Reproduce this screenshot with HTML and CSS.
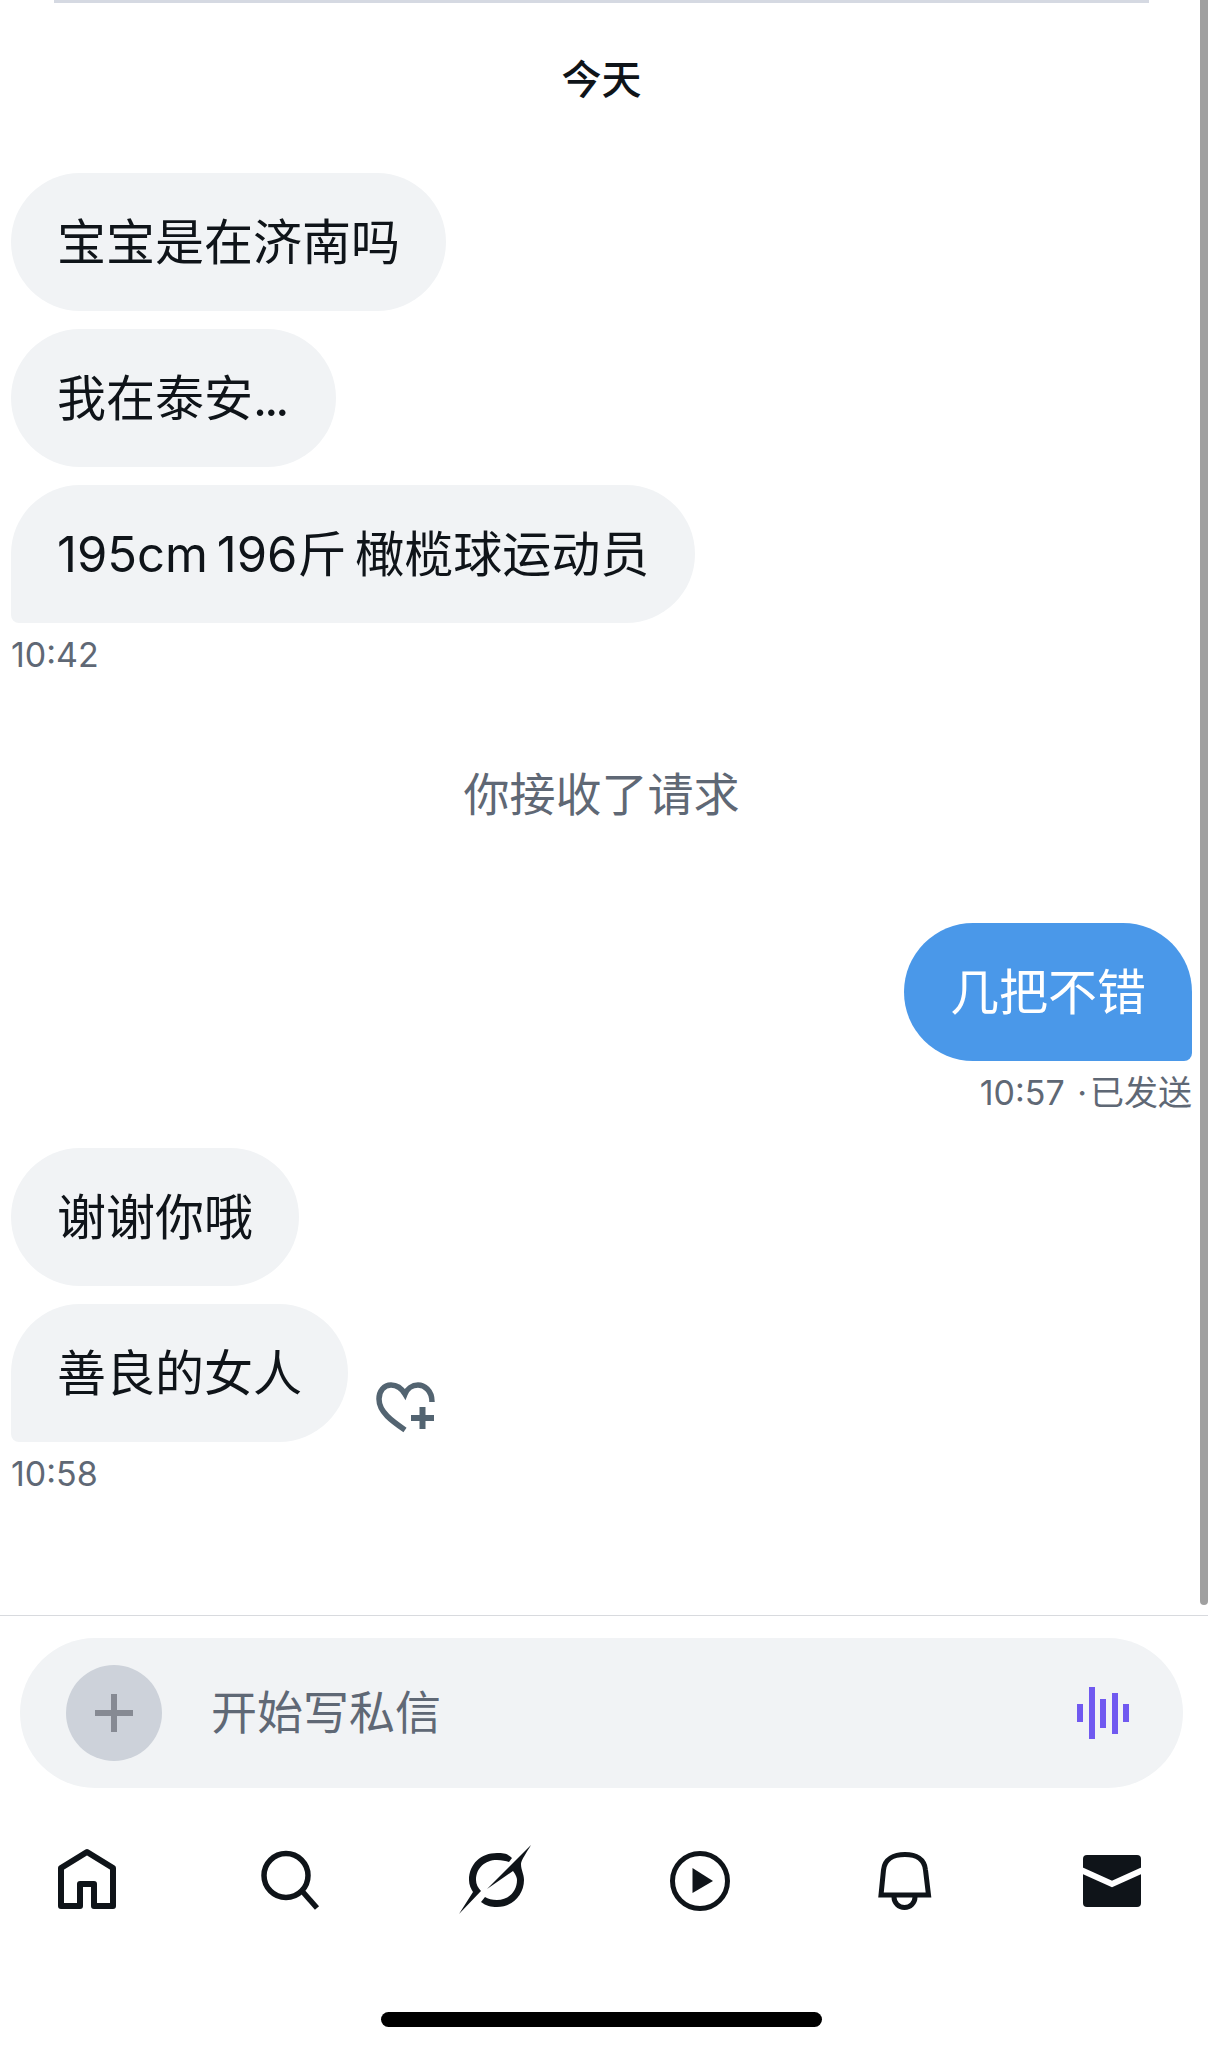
FILE: index.html
```html
<!DOCTYPE html>
<html lang="zh-CN">
<head>
    <meta charset="UTF-8">
    <meta name="viewport" content="width=device-width, initial-scale=1.0">
    <title>私信</title>
    <link rel="stylesheet" href="styles.css">
</head>
<body>
    <div class="page">
        <div class="scrollbar"></div>

        <div class="thread">
            <div class="top-rule"></div>
            <div class="day-label">今天</div>

            <div class="group first-group">
                <div class="bubble">宝宝是在济南吗</div>
                <div class="bubble">我在泰安<span class="dots">...</span></div>
                <div class="bubble tail-left">195cm 196斤 橄榄球运动员</div>
            </div>
            <div class="time">10:42</div>

            <div class="notice">你接收了请求</div>

            <div class="sent-row">
                <div class="bubble sent">几把不错</div>
            </div>
            <div class="time sent-time">10:57 <span class="dot">·</span>已发送</div>

            <div class="group second-group">
                <div class="bubble">谢谢你哦</div>
                <div class="bubble-row">
                    <div class="bubble tail-left">善良的女人</div>
                    <svg class="react-icon" viewBox="0 0 60 52" width="60" height="52">
                        <path d="M56 20C56 8 48 3 42 3C36 3 31 7 29 12C26 7 21 3 15 3C8 3 3 9 3 17C3 30 16 39 29 48" fill="none" stroke="#536471" stroke-width="5.5"/>
                        <path d="M35 36H58M46.500 25V47" fill="none" stroke="#536471" stroke-width="6"/>
                    </svg>
                </div>
            </div>
            <div class="time">10:58</div>
        </div>

        <div class="composer">
            <div class="input-pill">
                <div class="add-btn">
                    <svg viewBox="0 0 38 38" width="38" height="38">
                        <path d="M0 19H38M19 0V38" fill="none" stroke="#868a93" stroke-width="6"/>
                    </svg>
                </div>
                <div class="placeholder">开始写私信</div>
                <div class="voice-bars">
                    <span class="bar bar-s"></span>
                    <span class="bar bar-xl"></span>
                    <span class="bar bar-m"></span>
                    <span class="bar bar-l"></span>
                    <span class="bar bar-s"></span>
                </div>
            </div>
        </div>

        <div class="tabbar">
            <svg class="tab-icon" viewBox="0 0 72 72">
                <path d="M10 24L36 8L62 24V62H43V40H29V62H10Z" fill="none" stroke="#0f1419" stroke-width="6" stroke-linejoin="round"/>
            </svg>
            <svg class="tab-icon" viewBox="0 0 72 72">
                <circle cx="30" cy="31.500" r="22" fill="none" stroke="#0f1419" stroke-width="5.500"/>
                <path d="M46 47L61 64" fill="none" stroke="#0f1419" stroke-width="5.500"/>
            </svg>
            <svg class="tab-icon" viewBox="2 0 72 72">
                <path d="M53 14C48 9 44 9 38 9C22 9 10 20 10 36C10 41 12 45 14 48L0 70L22 47C19 44 17 40 17 36C17 24 26 16 38 16C43 16 47 17 50 18Z" fill="#0f1419"/>
                <path d="M72 1L28 45L54 27C57 31 58 34 58 36C58 48 49 56 38 56C33 56 29 55 26 53L22 58C27 62 32 63 38 63C53 63 65 51 65 36C65 30 62 26 62 20C62 16 68 8 72 1Z" fill="#0f1419"/>
            </svg>
            <svg class="tab-icon" viewBox="0 0 72 72">
                <circle cx="34" cy="37" r="27.500" fill="none" stroke="#0f1419" stroke-width="5"/>
                <path d="M26.500 24L47 37L26.500 49Z" fill="#0f1419"/>
            </svg>
            <svg class="tab-icon" viewBox="0 0 72 72">
                <path d="M10 51L12.500 26C13.500 15 23 10.500 34 10.500C45 10.500 53.500 15 54.500 26L57.500 51Z" fill="none" stroke="#0f1419" stroke-width="5"/>
                <path d="M23 53A10.500 10.500 0 0 0 44 53" fill="none" stroke="#0f1419" stroke-width="5"/>
            </svg>
            <svg class="tab-icon" viewBox="0 0 72 72">
                <rect x="7" y="11" width="58" height="52" rx="4" fill="#0f1419"/>
                <path d="M5 26L36 40L67 26" fill="none" stroke="#fff" stroke-width="6"/>
            </svg>
        </div>

        <div class="home-bar"></div>
    </div>
</body>
</html>
```

FILE: styles.css
```css
body {
    margin: 0;
    background: #fff;
    font-family: Inter, "Noto Sans CJK SC", sans-serif;
    color: #0f1419;
}
.page {
    position: relative;
    width: 1208px;
    height: 2048px;
    overflow: hidden;
    display: flex;
    flex-direction: column;
}
.scrollbar {
    position: absolute;
    top: 0;
    right: 0;
    width: 8px;
    height: 1605px;
    background: #a0a0a0;
    border-radius: 0 0 4px 4px;
}
.thread {
    height: 1615px;
    padding: 0 16px 0 11px;
    box-sizing: border-box;
}
.top-rule {
    height: 3px;
    margin: 0 43px;
    width: 1095px;
    background: #d5d9e2;
}
.day-label {
    margin-top: 53px;
    text-align: center;
    font-size: 40px;
    font-weight: 500;
    line-height: 48px;
}
.group {
    display: flex;
    flex-direction: column;
    align-items: flex-start;
    gap: 18px;
}
.first-group { margin-top: 69px; }
.second-group { margin-top: 33px; }
.bubble {
    padding: 41px 46px 39px;
    font-size: 49px;
    line-height: 58px;
    word-spacing: -5px;
    background: #f1f3f5;
    border-radius: 69px;
    white-space: nowrap;
}
.dots {
    letter-spacing: -3px;
    margin-right: 4px;
}
.tail-left { border-bottom-left-radius: 8px; }
.sent {
    background: #4a98e9;
    color: #fff;
    border-bottom-right-radius: 8px;
}
.sent-row {
    display: flex;
    justify-content: flex-end;
    margin-top: 99px;
}
.bubble-row {
    display: flex;
    align-items: flex-end;
}
.react-icon {
    margin-left: 28px;
    margin-bottom: 8px;
}
.time {
    margin-top: 10px;
    font-size: 34px;
    line-height: 44px;
    color: #5f6875;
}
.sent-time { text-align: right; }
.dot { margin: 0 3px; }
.notice {
    margin-top: 87px;
    text-align: center;
    font-size: 46px;
    line-height: 60px;
    color: #5f6875;
}
.composer {
    height: 230px;
    padding: 22px 25px 0 20px;
    box-sizing: border-box;
    border-top: 1px solid #d8dade;
}
.input-pill {
    height: 150px;
    display: flex;
    align-items: center;
    padding: 0 54px 0 46px;
    background: #f1f3f5;
    border-radius: 75px;
}
.add-btn {
    width: 96px;
    height: 96px;
    display: flex;
    align-items: center;
    justify-content: center;
    background: #cdd2da;
    border-radius: 50%;
}
.placeholder {
    flex: 1;
    margin: 0 0 8px 49px;
    font-size: 46px;
    color: #5f6875;
}
.voice-bars {
    display: flex;
    align-items: center;
    gap: 5.500px;
}
.bar {
    width: 6px;
    background: #7059f0;
}
.bar-s { height: 18px; }
.bar-m { height: 29px; }
.bar-l { height: 41px; }
.bar-xl { height: 52px; }
.tabbar {
    display: flex;
    justify-content: space-between;
    padding: 0 60px 0 51px;
    margin-top: -1px;
}
.tab-icon {
    width: 72px;
    height: 72px;
    overflow: visible;
}
.home-bar {
    width: 441px;
    height: 15px;
    margin: 96px 0 0 381px;
    background: #000;
    border-radius: 8px;
}
```
